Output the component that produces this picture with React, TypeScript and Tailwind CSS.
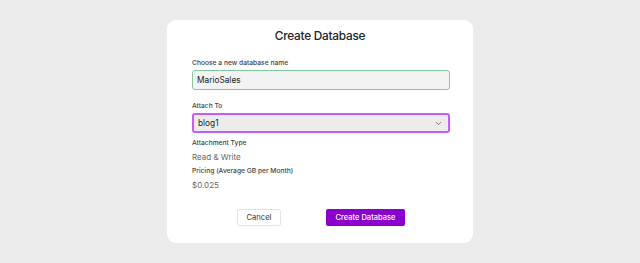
import { ChevronDown } from 'lucide-react';

const App = () => {
  return (
    <div className="w-[640px] h-[263px] bg-[#ebebeb] flex items-center justify-center font-['Inter','Liberation_Sans',sans-serif]">
      <div className="w-[306px] bg-white rounded-[9px] pt-[8px] pb-[17px]">
        <h1 className="text-center text-[11.8px] leading-[17px] font-medium tracking-[-0.02em] text-[#222]">Create Database</h1>

        <div className="w-[258px] ml-[25px] flex flex-col">
          <label className="mt-[13px] text-[6.7px] leading-[10px] font-medium text-[#444]">Choose a new database name</label>
          <input
            type="text"
            defaultValue="MarioSales"
            className="mt-[2px] h-[20px] w-full px-[4px] text-[8.3px] text-[#222] bg-[#f3f3f3] border border-[#84c99c] rounded-[3px] outline-none"
          />

          <label className="mt-[11px] text-[6.7px] leading-[10px] font-medium text-[#444]">Attach To</label>
          <div className="mt-[2px] h-[20px] w-full flex items-center justify-between px-[4px] bg-[#ececec] border-2 border-[#c65ef5] rounded-[3px]">
            <span className="text-[8.3px] text-[#222]">blog1</span>
            <ChevronDown className="w-[9px] h-[9px] text-[#555] mr-[1px]" strokeWidth={2} />
          </div>

          <label className="mt-[5px] text-[6.7px] leading-[10px] font-medium text-[#444]">Attachment Type</label>
          <p className="mt-[3px] text-[8px] leading-[12px] text-[#666]">Read &amp; Write</p>

          <label className="mt-[3px] text-[6.7px] leading-[10px] font-medium text-[#444]">Pricing (Average GB per Month)</label>
          <p className="mt-[3px] text-[8px] leading-[12px] text-[#666]">$0.025</p>

          <div className="mt-[18px] flex justify-center gap-[45px]">
            <button className="h-[17px] w-[44px] text-[7.6px] text-[#333] bg-white border border-[#e3e3e3] rounded-[2px]">
              Cancel
            </button>
            <button className="h-[17px] w-[79px] text-[7.5px] font-medium text-white bg-[#8a00cc] rounded-[2px]">
              Create Database
            </button>
          </div>
        </div>
      </div>
    </div>
  );
};

export default App;
